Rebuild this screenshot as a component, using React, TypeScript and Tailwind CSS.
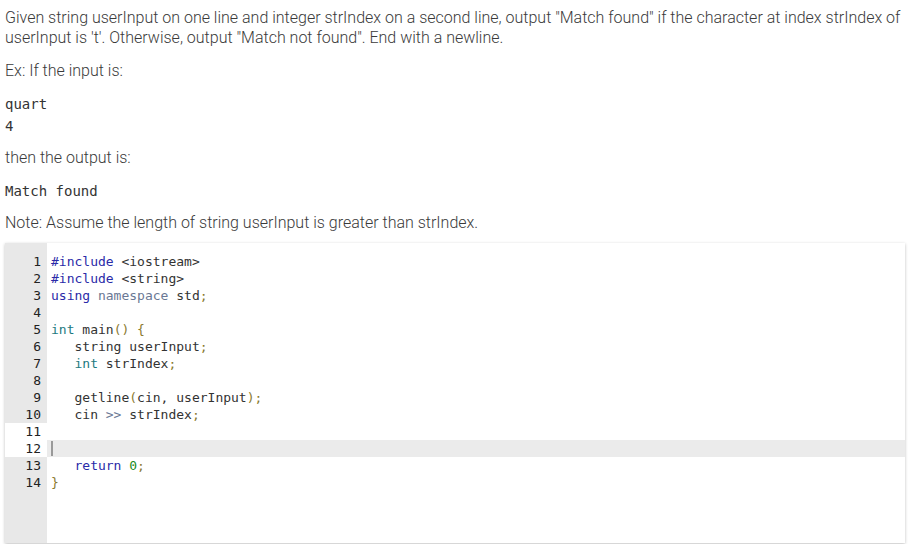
import React from 'react';

type Tok = [string, string];

const C = {
    kw: 'text-[#2a2aa8]',
    ns: 'text-[#6a7894]',
    ty: 'text-[#1d7a80]',
    br: 'text-[#8a7a30]',
    op: 'text-[#6a7894]',
    num: 'text-[#1a8a1a]',
    tx: 'text-[#333]',
};

const code: Tok[][] = [
    [[C.kw, '#include'], [C.tx, ' <iostream>']],
    [[C.kw, '#include'], [C.tx, ' <string>']],
    [[C.kw, 'using'], [C.tx, ' '], [C.ns, 'namespace'], [C.tx, ' std'], [C.br, ';']],
    [],
    [[C.ty, 'int'], [C.tx, ' main'], [C.br, '()'], [C.tx, ' '], [C.br, '{']],
    [[C.tx, '   string userInput'], [C.br, ';']],
    [[C.tx, '   '], [C.ty, 'int'], [C.tx, ' strIndex'], [C.br, ';']],
    [],
    [[C.tx, '   getline'], [C.br, '('], [C.tx, 'cin, userInput'], [C.br, ');']],
    [[C.tx, '   cin '], [C.op, '>>'], [C.tx, ' strIndex'], [C.br, ';']],
    [],
    [],
    [[C.tx, '   '], [C.kw, 'return'], [C.tx, ' '], [C.num, '0'], [C.br, ';']],
    [[C.br, '}']],
];

const mono = "font-['DejaVu_Sans_Mono',monospace]";

const App: React.FC = () => {
    return (
        <div className="bg-white w-[913px] h-[544px] overflow-hidden px-[5px] font-['Roboto',sans-serif] font-light text-[16px] leading-[20px] text-[#3a3a3a]">
            <p className="pt-[8px]">
                Given string userInput on one line and integer strIndex on a second line, output "Match found" if the character at index strIndex of userInput is 't'. Otherwise, output "Match not found". End with a newline.
            </p>
            <p className="mt-[13px]">Ex: If the input is:</p>
            <pre className={`${mono} mt-[12px] text-[14px] leading-[22px] text-[#333]`}>quart{'\n'}4</pre>
            <p className="mt-[11px]">then the output is:</p>
            <pre className={`${mono} mt-[13px] text-[14px] leading-[20px] text-[#333]`}>Match found</pre>
            <p className="mt-[12px]">Note: Assume the length of string userInput is greater than strIndex.</p>

            <div className="mt-[10px] w-[900px] h-[300px] bg-white flex shadow-[0_1px_3px_rgba(0,0,0,0.25)] overflow-hidden">
                <div className="w-[42px] bg-[#e8e8e8] flex flex-col pt-[10px]">
                    {code.map((_, i) => (
                        <div
                            key={i}
                            className={`${mono} h-[17px] leading-[17px] text-[13px] text-right pr-[6px] text-[#222] ${i === 10 || i === 11 ? 'bg-white' : ''}`}
                        >
                            {i + 1}
                        </div>
                    ))}
                </div>
                <div className="flex-1 flex flex-col pt-[10px]">
                    {code.map((line, i) => (
                        <div
                            key={i}
                            className={`${mono} relative h-[17px] leading-[17px] text-[13px] whitespace-pre pl-[4px] ${i === 11 ? 'bg-[#ebebeb]' : ''}`}
                        >
                            {i === 11 && <span className="absolute left-[4px] top-[1px] w-[2px] h-[15px] bg-[#999]" />}
                            {line.map(([cls, t], j) => (
                                <span key={j} className={cls}>{t}</span>
                            ))}
                        </div>
                    ))}
                </div>
            </div>
        </div>
    );
};

export default App;
